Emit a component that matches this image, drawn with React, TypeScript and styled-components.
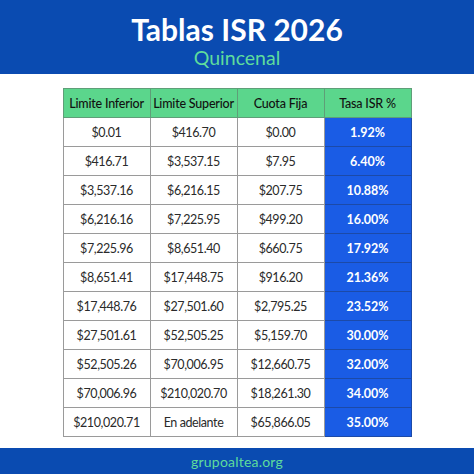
import React from "react";
import styled, { createGlobalStyle } from "styled-components";

const Global = createGlobalStyle`
  html, body { margin: 0; padding: 0; background: #fff; }
  body { font-family: Lato, "Open Sans", sans-serif; }
`;

const Page = styled.div`
  width: 474px;
  height: 474px;
  display: flex;
  flex-direction: column;
  align-items: center;
  overflow: hidden;
`;

const Header = styled.header`
  width: 100%;
  height: 74px;
  background: #0a4bb1;
  display: flex;
  flex-direction: column;
  align-items: center;
  box-sizing: border-box;
  padding-top: 11px;
`;

const Title = styled.h1`
  margin: 0;
  font-size: 30px;
  line-height: 36px;
  font-weight: 700;
  color: #fff;
`;

const Subtitle = styled.div`
  font-size: 19.5px;
  line-height: 22px;
  color: #5edc9c;
`;

const Table = styled.table`
  margin-top: 14px;
  width: 349px;
  border-collapse: collapse;
  table-layout: fixed;
  font-size: 12.5px;
  color: #222;
`;

const Th = styled.th`
  height: 28px;
  padding: 0;
  background: #5bd68c;
  border: 1.5px solid #5f9e78;
  font-weight: 500;
  font-size: 12.5px;
  letter-spacing: -0.2px;
  white-space: nowrap;
  color: #111;
`;

const Td = styled.td<{ $rate?: boolean }>`
  height: 28px;
  padding: 0;
  text-align: center;
  white-space: nowrap;
  letter-spacing: ${(p) => (p.$rate ? "0" : "-0.4px")};
  border: 1.5px solid #9a9a9a;
  background: ${(p) => (p.$rate ? "#1a5ce5" : "#fff")};
  color: ${(p) => (p.$rate ? "#fff" : "#2a2a2a")};
  font-weight: ${(p) => (p.$rate ? 700 : 400)};
  ${(p) => (p.$rate ? "border-color: #1c4aa8;" : "")}
`;

const Footer = styled.footer`
  margin-top: auto;
  width: 100%;
  height: 26px;
  background: #0a4bb1;
  display: flex;
  align-items: center;
  justify-content: center;
  color: #5edc9c;
  font-size: 14px;
  letter-spacing: 0.2px;
`;

const rows: [string, string, string, string][] = [
  ["$0.01", "$416.70", "$0.00", "1.92%"],
  ["$416.71", "$3,537.15", "$7.95", "6.40%"],
  ["$3,537.16", "$6,216.15", "$207.75", "10.88%"],
  ["$6,216.16", "$7,225.95", "$499.20", "16.00%"],
  ["$7,225.96", "$8,651.40", "$660.75", "17.92%"],
  ["$8,651.41", "$17,448.75", "$916.20", "21.36%"],
  ["$17,448.76", "$27,501.60", "$2,795.25", "23.52%"],
  ["$27,501.61", "$52,505.25", "$5,159.70", "30.00%"],
  ["$52,505.26", "$70,006.95", "$12,660.75", "32.00%"],
  ["$70,006.96", "$210,020.70", "$18,261.30", "34.00%"],
  ["$210,020.71", "En adelante", "$65,866.05", "35.00%"],
];

export default function App() {
  return (
    <>
      <Global />
      <Page>
        <Header>
          <Title>Tablas ISR 2026</Title>
          <Subtitle>Quincenal</Subtitle>
        </Header>
        <Table>
          <thead>
            <tr>
              <Th>Limite Inferior</Th>
              <Th>Limite Superior</Th>
              <Th>Cuota Fija</Th>
              <Th>Tasa ISR %</Th>
            </tr>
          </thead>
          <tbody>
            {rows.map((r) => (
              <tr key={r[0]}>
                <Td>{r[0]}</Td>
                <Td>{r[1]}</Td>
                <Td>{r[2]}</Td>
                <Td $rate>{r[3]}</Td>
              </tr>
            ))}
          </tbody>
        </Table>
        <Footer>grupoaltea.org</Footer>
      </Page>
    </>
  );
}
